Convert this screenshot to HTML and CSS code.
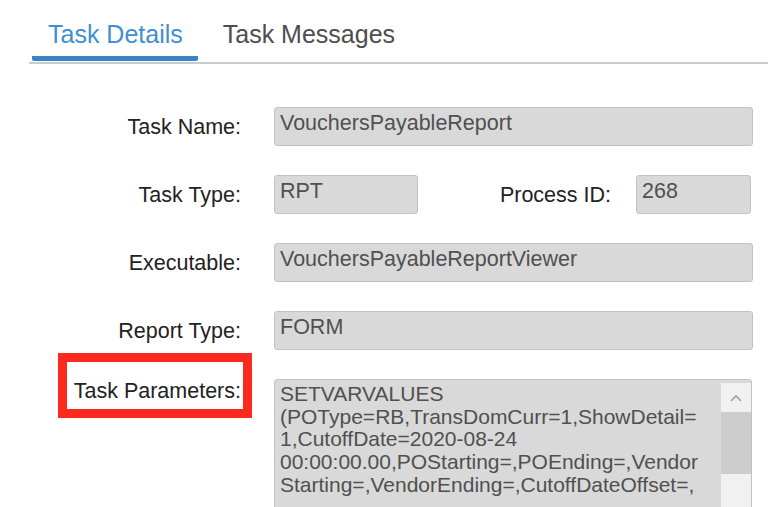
FILE: index.html
```html
<!DOCTYPE html>
<html>
<head>
<meta charset="utf-8">
<link rel="stylesheet" href="styles.css">
</head>
<body>
<div class="page">
  <div class="tabs">
    <div class="tab active">Task Details</div>
    <div class="tab">Task Messages</div>
  </div>
  <div class="form">
    <div class="label">Task Name:</div>
    <div class="field">VouchersPayableReport</div>

    <div class="label">Task Type:</div>
    <div class="split">
      <div class="field short">RPT</div>
      <div class="label inline">Process ID:</div>
      <div class="field pid">268</div>
    </div>

    <div class="label">Executable:</div>
    <div class="field">VouchersPayableReportViewer</div>

    <div class="label">Report Type:</div>
    <div class="field">FORM</div>

    <div class="label top"><span class="marked">Task Parameters:</span></div>
    <div class="textarea">
      <div class="ta-text">SETVARVALUES<br>(POType=RB,TransDomCurr=1,ShowDetail=<br>1,CutoffDate=2020-08-24<br>00:00:00.00,POStarting=,POEnding=,Vendor<br>Starting=,VendorEnding=,CutoffDateOffset=,</div>
      <div class="scrollbar">
        <div class="sb-btn">
          <svg width="12" height="8" viewBox="0 0 12 8"><path d="M1 7 L6 2 L11 7" fill="none" stroke="#a3a3a3" stroke-width="1.6"/></svg>
        </div>
        <div class="sb-thumb"></div>
        <div class="sb-track"></div>
      </div>
    </div>
  </div>
</div>
</body>
</html>
```
FILE: styles.css
```css
html, body {
  margin: 0;
  padding: 0;
  background: #ffffff;
  overflow: hidden;
  height: 507px;
}
body {
  font-family: "Liberation Sans", Arial, sans-serif;
}
.page {
  width: 768px;
}
.tabs {
  display: flex;
  gap: 9px;
  margin-left: 29px;
  padding-top: 20px;
  padding-left: 3px;
  border-bottom: 2px solid #cbcbcb;
}
.tab {
  font-size: 25px;
  color: #4e4e4e;
  padding: 0 15px 7px 16px;
  margin-bottom: 1px;
  border-bottom: 5px solid transparent;
  line-height: 29px;
}
.tab.active {
  color: #3f8fd2;
  border-bottom-color: #3a83c6;
  border-radius: 0 0 2px 2px;
}
.form {
  display: grid;
  grid-template-columns: 241px 479px;
  column-gap: 33px;
  row-gap: 29px;
  margin-top: 43px;
  align-items: center;
}
.label {
  font-size: 21.5px;
  color: #222222;
  text-align: right;
  line-height: 24px;
}
.label.top {
  align-self: start;
}
.field {
  box-sizing: border-box;
  height: 39px;
  background: #d9d9d9;
  border: 1px solid #c2c2c2;
  border-radius: 3px;
  padding: 3px 5px 0;
  font-size: 21.5px;
  line-height: 24px;
  color: #505050;
}
.split {
  display: flex;
  align-items: center;
}
.field.short {
  width: 144px;
}
.label.inline {
  margin-left: auto;
  margin-right: 25px;
}
.field.pid {
  width: 115px;
  margin-right: 2px;
}
.marked {
  position: relative;
  display: inline-block;
}
.marked::after {
  content: "";
  position: absolute;
  top: -26px;
  right: -11px;
  bottom: -15px;
  left: -16px;
  border: 9px solid #fb2a1f;
}
.textarea {
  box-sizing: border-box;
  display: flex;
  width: 478px;
  height: 140px;
  background: #d9d9d9;
  border: 1px solid #c2c2c2;
  border-radius: 3px;
}
.ta-text {
  flex: 1;
  padding: 3px 5px 0;
  font-size: 21px;
  line-height: 22.7px;
  color: #505050;
  white-space: nowrap;
  overflow: hidden;
}
.scrollbar {
  width: 30px;
  margin: 3px 0 0;
  display: flex;
  flex-direction: column;
}
.sb-btn {
  height: 29px;
  background: #f1f1f1;
  display: flex;
  align-items: center;
  justify-content: center;
}
.sb-thumb {
  height: 62px;
  background: #cdcdcd;
}
.sb-track {
  flex: 1;
  background: #f1f1f1;
}
```
